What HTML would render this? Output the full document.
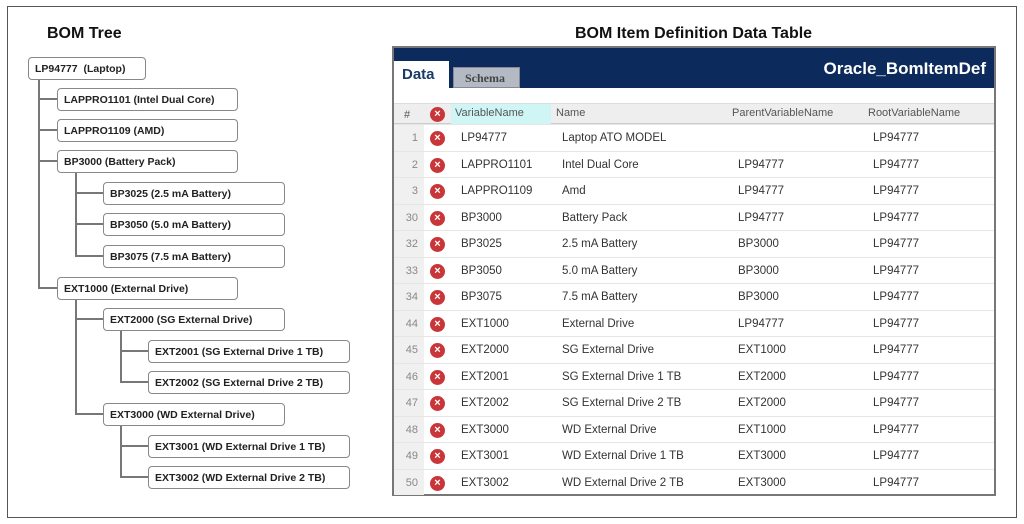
<!DOCTYPE html>
<html><head><meta charset="utf-8"><style>
*{margin:0;padding:0;box-sizing:border-box}
body{width:1024px;height:524px;background:#fff;position:relative;overflow:hidden;font-family:"Liberation Sans",sans-serif}
.a{position:absolute}
.frame{left:7px;top:6px;width:1010px;height:512px;border:1px solid #555}
.t{font-weight:bold;font-size:16px;color:#111;white-space:nowrap}
.b{position:absolute;height:23px;border:1px solid #888;border-radius:4px;background:#fff;font-size:10.5px;font-weight:bold;color:#222;padding:5px 0 0 6px;white-space:nowrap;font-family:"Liberation Sans",sans-serif}
.v{position:absolute;width:2px;background:#777}
.h{position:absolute;height:2px;background:#777}
.tbl{left:392px;top:46px;width:604px;height:450px;border:2px solid #777;background:#fff}
.nav{left:0;top:0;width:600px;height:40px;background:#0c2a5b}
.row{position:absolute;left:0;width:600px;height:26.5px;border-top:1px solid #e6e6e6;font-size:11.5px;color:#333}
.row span{position:absolute;top:7px;white-space:nowrap}
.num{position:absolute;left:0;top:0;width:30px;height:100%;background:#f0f0f0;color:#888;text-align:right;padding-right:6px;font-size:11px}
.x{position:absolute;left:36px;top:6px;width:15px;height:15px;border-radius:50%;background:#c8363a;color:#fff;font-size:11px;font-weight:bold;text-align:center;line-height:15px}
</style></head><body>
<div class="a frame"></div>
<div class="a t" style="left:47px;top:25px">BOM Tree</div>
<div class="a t" style="left:575px;top:25px">BOM Item Definition Data Table</div>

<div class="v" style="left:38px;top:79px;height:210px"></div>
<div class="v" style="left:75px;top:172px;height:85px"></div>
<div class="v" style="left:75px;top:299px;height:116px"></div>
<div class="v" style="left:120px;top:330px;height:53px"></div>
<div class="v" style="left:120px;top:425px;height:53px"></div>
<div class="h" style="left:38px;top:98px;width:20px"></div>
<div class="h" style="left:38px;top:129px;width:20px"></div>
<div class="h" style="left:38px;top:160px;width:20px"></div>
<div class="h" style="left:38px;top:287px;width:20px"></div>
<div class="h" style="left:75px;top:192px;width:29px"></div>
<div class="h" style="left:75px;top:223px;width:29px"></div>
<div class="h" style="left:75px;top:255px;width:29px"></div>
<div class="h" style="left:75px;top:318px;width:29px"></div>
<div class="h" style="left:75px;top:413px;width:29px"></div>
<div class="h" style="left:120px;top:350px;width:29px"></div>
<div class="h" style="left:120px;top:381px;width:29px"></div>
<div class="h" style="left:120px;top:445px;width:29px"></div>
<div class="h" style="left:120px;top:476px;width:29px"></div>

<div class="b" style="left:28px;top:57px;width:118px">LP94777&nbsp; (Laptop)</div>
<div class="b" style="left:57px;top:88px;width:181px">LAPPRO1101 (Intel Dual Core)</div>
<div class="b" style="left:57px;top:119px;width:181px">LAPPRO1109 (AMD)</div>
<div class="b" style="left:57px;top:150px;width:181px">BP3000 (Battery Pack)</div>
<div class="b" style="left:103px;top:182px;width:182px">BP3025 (2.5 mA Battery)</div>
<div class="b" style="left:103px;top:213px;width:182px">BP3050 (5.0 mA Battery)</div>
<div class="b" style="left:103px;top:245px;width:182px">BP3075 (7.5 mA Battery)</div>
<div class="b" style="left:57px;top:277px;width:181px">EXT1000 (External Drive)</div>
<div class="b" style="left:103px;top:308px;width:182px">EXT2000 (SG External Drive)</div>
<div class="b" style="left:148px;top:340px;width:202px">EXT2001 (SG External Drive 1 TB)</div>
<div class="b" style="left:148px;top:371px;width:202px">EXT2002 (SG External Drive 2 TB)</div>
<div class="b" style="left:103px;top:403px;width:182px">EXT3000 (WD External Drive)</div>
<div class="b" style="left:148px;top:435px;width:202px">EXT3001 (WD External Drive 1 TB)</div>
<div class="b" style="left:148px;top:466px;width:202px">EXT3002 (WD External Drive 2 TB)</div>

<div class="a tbl">
 <div class="a nav"></div>
 <div class="a" style="left:0;top:13px;width:55px;height:28px;background:#fff;font-weight:bold;font-size:15px;color:#1a3a6a;padding:5px 0 0 8px">Data</div>
 <div class="a" style="left:59px;top:19px;width:67px;height:21px;background:#b4bac4;border:1px solid #889;font-family:'Liberation Serif',serif;font-weight:bold;font-size:12px;color:#444;padding:3px 0 0 11px">Schema</div>
 <div class="a" style="right:8px;top:11px;color:#fff;font-weight:bold;font-size:17px">Oracle_BomItemDef</div>
 <div class="a" style="left:0;top:40px;width:600px;height:16px;background:#fff"></div>
 <div class="a" style="left:0;top:55px;width:600px;height:21px;background:#eee;border-top:1px solid #ddd;border-bottom:1px solid #ccc;font-size:11px;color:#555">
  <span class="a" style="left:10px;top:5px">#</span>
  <div class="x" style="top:3px">×</div>
  <span class="a" style="left:57px;top:0;width:100px;height:20px;background:#cff5f5;padding:3px 0 0 4px">VariableName</span>
  <span class="a" style="left:162px;top:3px">Name</span>
  <span class="a" style="left:338px;top:3px">ParentVariableName</span>
  <span class="a" style="left:474px;top:3px">RootVariableName</span>
 </div>
 <div class="a" style="left:0;top:76px;width:600px">
  <div class="row" style="top:0"><div class="num" style="padding-top:7px">1</div><div class="x">×</div><span style="left:67px">LP94777</span><span style="left:168px">Laptop ATO MODEL</span><span style="left:344px"></span><span style="left:479px">LP94777</span></div>
  <div class="row" style="top:26.5px"><div class="num" style="padding-top:7px">2</div><div class="x">×</div><span style="left:67px">LAPPRO1101</span><span style="left:168px">Intel Dual Core</span><span style="left:344px">LP94777</span><span style="left:479px">LP94777</span></div>
  <div class="row" style="top:53px"><div class="num" style="padding-top:7px">3</div><div class="x">×</div><span style="left:67px">LAPPRO1109</span><span style="left:168px">Amd</span><span style="left:344px">LP94777</span><span style="left:479px">LP94777</span></div>
  <div class="row" style="top:79.5px"><div class="num" style="padding-top:7px">30</div><div class="x">×</div><span style="left:67px">BP3000</span><span style="left:168px">Battery Pack</span><span style="left:344px">LP94777</span><span style="left:479px">LP94777</span></div>
  <div class="row" style="top:106px"><div class="num" style="padding-top:7px">32</div><div class="x">×</div><span style="left:67px">BP3025</span><span style="left:168px">2.5 mA Battery</span><span style="left:344px">BP3000</span><span style="left:479px">LP94777</span></div>
  <div class="row" style="top:132.5px"><div class="num" style="padding-top:7px">33</div><div class="x">×</div><span style="left:67px">BP3050</span><span style="left:168px">5.0 mA Battery</span><span style="left:344px">BP3000</span><span style="left:479px">LP94777</span></div>
  <div class="row" style="top:159px"><div class="num" style="padding-top:7px">34</div><div class="x">×</div><span style="left:67px">BP3075</span><span style="left:168px">7.5 mA Battery</span><span style="left:344px">BP3000</span><span style="left:479px">LP94777</span></div>
  <div class="row" style="top:185.5px"><div class="num" style="padding-top:7px">44</div><div class="x">×</div><span style="left:67px">EXT1000</span><span style="left:168px">External Drive</span><span style="left:344px">LP94777</span><span style="left:479px">LP94777</span></div>
  <div class="row" style="top:212px"><div class="num" style="padding-top:7px">45</div><div class="x">×</div><span style="left:67px">EXT2000</span><span style="left:168px">SG External Drive</span><span style="left:344px">EXT1000</span><span style="left:479px">LP94777</span></div>
  <div class="row" style="top:238.5px"><div class="num" style="padding-top:7px">46</div><div class="x">×</div><span style="left:67px">EXT2001</span><span style="left:168px">SG External Drive 1 TB</span><span style="left:344px">EXT2000</span><span style="left:479px">LP94777</span></div>
  <div class="row" style="top:265px"><div class="num" style="padding-top:7px">47</div><div class="x">×</div><span style="left:67px">EXT2002</span><span style="left:168px">SG External Drive 2 TB</span><span style="left:344px">EXT2000</span><span style="left:479px">LP94777</span></div>
  <div class="row" style="top:291.5px"><div class="num" style="padding-top:7px">48</div><div class="x">×</div><span style="left:67px">EXT3000</span><span style="left:168px">WD External Drive</span><span style="left:344px">EXT1000</span><span style="left:479px">LP94777</span></div>
  <div class="row" style="top:318px"><div class="num" style="padding-top:7px">49</div><div class="x">×</div><span style="left:67px">EXT3001</span><span style="left:168px">WD External Drive 1 TB</span><span style="left:344px">EXT3000</span><span style="left:479px">LP94777</span></div>
  <div class="row" style="top:344.5px"><div class="num" style="padding-top:7px">50</div><div class="x">×</div><span style="left:67px">EXT3002</span><span style="left:168px">WD External Drive 2 TB</span><span style="left:344px">EXT3000</span><span style="left:479px">LP94777</span></div>
 </div>
</div>
</body></html>
